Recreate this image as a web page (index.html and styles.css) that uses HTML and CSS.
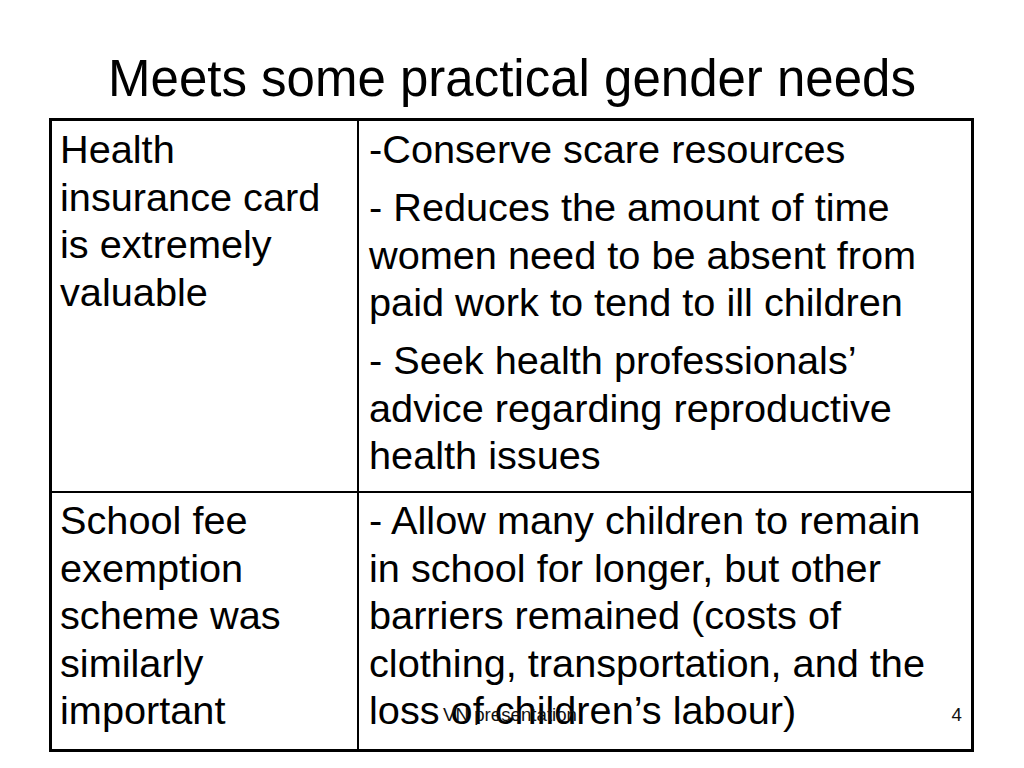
FILE: index.html
```html
<!DOCTYPE html>
<html>
<head>
<meta charset="utf-8">
<link rel="stylesheet" href="styles.css">
</head>
<body>
<div class="slide">
  <h1 class="title">Meets some practical gender needs</h1>
  <div class="grid">
    <div class="cell left row1">Health<br>insurance card<br>is extremely<br>valuable</div>
    <div class="cell right row1">
      <p>-Conserve scare resources</p>
      <p>- Reduces the amount of time<br>women need to be absent from<br>paid work to tend to ill children</p>
      <p>- Seek health professionals’<br>advice regarding reproductive<br>health issues</p>
    </div>
    <div class="cell left row2">School fee<br>exemption<br>scheme was<br>similarly<br>important</div>
    <div class="cell right row2">
      <p>- Allow many children to remain<br>in school for longer, but other<br>barriers remained (costs of<br>clothing, transportation, and the<br>loss of children’s labour)</p>
    </div>
  </div>
  <div class="footer">VN presentation</div>
  <div class="pagenum">4</div>
</div>
</body>
</html>
```
FILE: styles.css
```css
html, body {
  margin: 0;
  padding: 0;
  background: #ffffff;
}
.slide {
  position: relative;
  width: 1024px;
  height: 768px;
  background: #ffffff;
  font-family: "Liberation Sans", Arial, sans-serif;
  color: #000000;
  overflow: hidden;
}
.title {
  margin: 0;
  padding-top: 51px;
  height: 56px;
  font-size: 51px;
  line-height: 56px;
  font-weight: normal;
  text-align: center;
  margin-bottom: 11px;
}
.grid {
  margin-left: 49px;
  width: 919px;
  display: grid;
  grid-template-columns: 305px 612px;
  grid-template-rows: 370px 256px;
  gap: 2px;
  background: #000000;
  border: 3px solid #000000;
}
.cell {
  background: #ffffff;
  font-size: 39.7px;
  line-height: 47.5px;
}
.left {
  padding: 5px 8px 0 8px;
}
.right {
  padding: 5px 8px 0 10px;
}
.row2 {
  padding-top: 4px;
}
.cell p {
  margin: 0 0 10.5px 0;
}
.footer {
  position: absolute;
  left: 443px;
  top: 704px;
  font-size: 18.7px;
  line-height: 22px;
  color: #111111;
}
.pagenum {
  position: absolute;
  right: 62px;
  top: 704px;
  font-size: 18.7px;
  line-height: 22px;
  color: #111111;
}
```
